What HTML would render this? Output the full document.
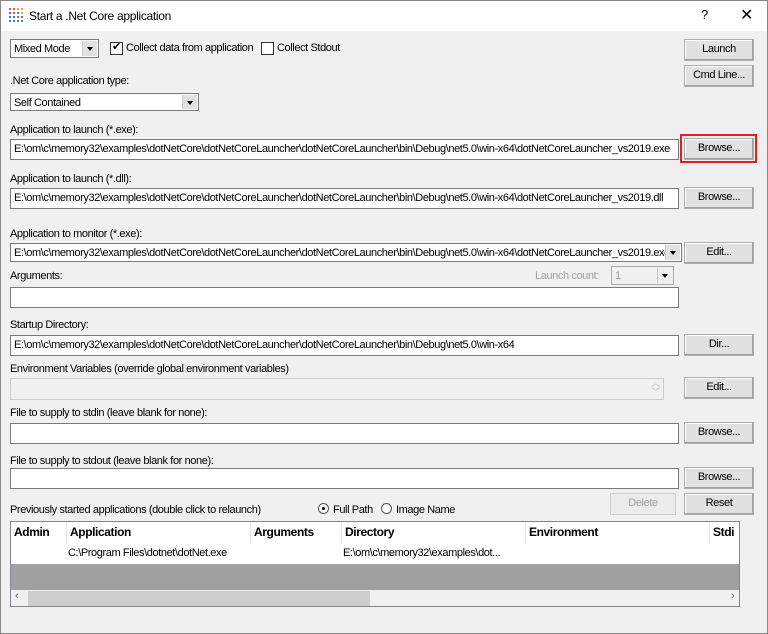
<!DOCTYPE html>
<html><head><style>
*{box-sizing:border-box;margin:0;padding:0}
body{width:768px;height:634px;background:#f0f0f0;font-family:"Liberation Sans",sans-serif;font-size:11px;letter-spacing:-0.4px;color:#000;position:relative;overflow:hidden;border:1px solid #888}
.a{position:absolute;white-space:nowrap}
.title{left:0;top:0;width:766px;height:30px;background:#fff;letter-spacing:0}
.in{position:absolute;background:#fff;border:1px solid #7a7a7a;padding:2px 3px;line-height:15px;white-space:nowrap;overflow:hidden}
.btn{position:absolute;background:#e1e1e1;border:1px solid #adadad;text-align:center;line-height:19px;box-shadow:inset -1px -1px 0 #a0a0a0,inset 1px 1px 0 #fff}
.dd{position:absolute;right:1px;top:1px;bottom:1px;width:15px;background:#e1e1e1;border-left:1px solid #ccc}
.dd:after{content:"";position:absolute;left:4px;top:6px;border:3.5px solid transparent;border-top:4px solid #000}
.cb{position:absolute;width:13px;height:13px;border:1px solid #333;background:#fff}
.th{position:absolute;top:0;height:21px;line-height:21px;font-weight:bold;font-size:12px;padding-left:3px;border-right:1px solid #e5e5e5}
</style></head><body>
<div class="a title"></div>
<svg class="a" style="left:8px;top:7px" width="15" height="15"><g fill="#e0602a"><rect x="0" y="0" width="2" height="2"/><rect x="4" y="0" width="2" height="2"/><rect x="8" y="0" width="2" height="2" fill="#e8a030"/><rect x="12" y="0" width="2" height="2" fill="#e8a030"/></g><g fill="#3a7ad0"><rect x="0" y="4" width="2" height="2"/><rect x="4" y="4" width="2" height="2" fill="#e0602a"/><rect x="8" y="4" width="2" height="2"/><rect x="12" y="4" width="2" height="2" fill="#e8a030"/><rect x="0" y="8" width="2" height="2"/><rect x="4" y="8" width="2" height="2"/><rect x="8" y="8" width="2" height="2" fill="#e0602a"/><rect x="12" y="8" width="2" height="2"/><rect x="0" y="12" width="2" height="2"/><rect x="4" y="12" width="2" height="2"/><rect x="8" y="12" width="2" height="2"/><rect x="12" y="12" width="2" height="2"/></g></svg>
<div class="a" style="left:28px;top:8px;font-size:12px;letter-spacing:-0.3px">Start a .Net Core application</div>
<div class="a" style="left:700px;top:6px;font-size:13px">?</div>
<div class="a" style="left:739px;top:4px;font-size:16px">✕</div>

<div class="in" style="left:9px;top:38px;width:89px;height:19px">Mixed Mode<div class="dd"></div></div>
<div class="cb" style="left:109px;top:41px"><span style="position:absolute;left:1px;top:-3px;font-size:11px">✔</span></div>
<div class="a" style="left:125px;top:41px">Collect data from application</div>
<div class="cb" style="left:260px;top:41px"></div>
<div class="a" style="left:276px;top:41px">Collect Stdout</div>
<div class="btn" style="left:683px;top:38px;width:70px;height:22px">Launch</div>
<div class="btn" style="left:683px;top:64px;width:70px;height:22px">Cmd Line...</div>

<div class="a" style="left:9px;top:74px">.Net Core application type:</div>
<div class="in" style="left:9px;top:92px;width:189px;height:18px">Self Contained<div class="dd"></div></div>

<div class="a" style="left:9px;top:123px">Application to launch (*.exe):</div>
<div class="in" style="left:9px;top:138px;width:669px;height:21px">E:\om\c\memory32\examples\dotNetCore\dotNetCoreLauncher\dotNetCoreLauncher\bin\Debug\net5.0\win-x64\dotNetCoreLauncher_vs2019.exe</div>
<div class="a" style="left:679px;top:133px;width:77px;height:29px;border:2px solid #e02020"></div>
<div class="btn" style="left:683px;top:137px;width:70px;height:22px">Browse...</div>

<div class="a" style="left:9px;top:172px">Application to launch (*.dll):</div>
<div class="in" style="left:9px;top:187px;width:669px;height:21px">E:\om\c\memory32\examples\dotNetCore\dotNetCoreLauncher\dotNetCoreLauncher\bin\Debug\net5.0\win-x64\dotNetCoreLauncher_vs2019.dll</div>
<div class="btn" style="left:683px;top:186px;width:70px;height:22px">Browse...</div>

<div class="a" style="left:9px;top:227px">Application to monitor (*.exe):</div>
<div class="in" style="left:9px;top:242px;width:672px;height:19px;padding-right:18px">E:\om\c\memory32\examples\dotNetCore\dotNetCoreLauncher\dotNetCoreLauncher\bin\Debug\net5.0\win-x64\dotNetCoreLauncher_vs2019.exe<div class="dd"></div></div>
<div class="btn" style="left:683px;top:241px;width:70px;height:22px">Edit...</div>

<div class="a" style="left:9px;top:269px">Arguments:</div>
<div class="a" style="left:534px;top:269px;color:#a0a0a0">Launch count:</div>
<div class="in" style="left:610px;top:265px;width:63px;height:19px;background:#f0f0f0;border-color:#aaa;color:#999">1<div class="dd" style="background:#f0f0f0"></div></div>
<div class="in" style="left:9px;top:286px;width:669px;height:21px"></div>

<div class="a" style="left:9px;top:318px">Startup Directory:</div>
<div class="in" style="left:9px;top:334px;width:669px;height:21px">E:\om\c\memory32\examples\dotNetCore\dotNetCoreLauncher\dotNetCoreLauncher\bin\Debug\net5.0\win-x64</div>
<div class="btn" style="left:683px;top:333px;width:70px;height:22px">Dir...</div>

<div class="a" style="left:9px;top:362px">Environment Variables (override global environment variables)</div>
<div class="in" style="left:9px;top:377px;width:654px;height:22px;background:#f0f0f0;border-color:#ccc"><span style="position:absolute;right:3px;top:0;color:#bbb;font-size:9px;line-height:9px">︿<br>﹀</span></div>
<div class="btn" style="left:683px;top:376px;width:70px;height:22px">Edit...</div>

<div class="a" style="left:9px;top:406px">File to supply to stdin (leave blank for none):</div>
<div class="in" style="left:9px;top:422px;width:669px;height:21px"></div>
<div class="btn" style="left:683px;top:421px;width:70px;height:22px">Browse...</div>

<div class="a" style="left:9px;top:454px">File to supply to stdout (leave blank for none):</div>
<div class="in" style="left:9px;top:467px;width:669px;height:21px"></div>
<div class="btn" style="left:683px;top:466px;width:70px;height:22px">Browse...</div>

<div class="a" style="left:9px;top:503px">Previously started applications (double click to relaunch)</div>
<div class="a" style="left:317px;top:502px;width:11px;height:11px;border-radius:50%;border:1px solid #555;background:#fff"><div style="position:absolute;left:3px;top:3px;width:3px;height:3px;border-radius:50%;background:#000"></div></div>
<div class="a" style="left:332px;top:503px">Full Path</div>
<div class="a" style="left:380px;top:502px;width:11px;height:11px;border-radius:50%;border:1px solid #555;background:#fff"></div>
<div class="a" style="left:395px;top:503px">Image Name</div>
<div class="btn" style="left:609px;top:492px;width:66px;height:22px;color:#a0a0a0;box-shadow:none;border-color:#ccc;background:#ececec">Delete</div>
<div class="btn" style="left:683px;top:492px;width:70px;height:22px">Reset</div>

<div class="a" style="left:9px;top:520px;width:730px;height:86px;border:1px solid #828790;background:#fff;overflow:hidden">
 <div class="th" style="left:0;width:56px">Admin</div>
 <div class="th" style="left:56px;width:184px">Application</div>
 <div class="th" style="left:240px;width:91px">Arguments</div>
 <div class="th" style="left:331px;width:184px">Directory</div>
 <div class="th" style="left:515px;width:184px">Environment</div>
 <div class="th" style="left:699px;width:40px">Stdi</div>
 <div class="a" style="left:57px;top:25px">C:\Program Files\dotnet\dotNet.exe</div>
 <div class="a" style="left:332px;top:25px">E:\om\c\memory32\examples\dot...</div>
 <div class="a" style="left:0;top:42px;width:730px;height:26px;background:#a0a0a0"></div>
 <div class="a" style="left:0;top:68px;width:730px;height:17px;background:#f0f0f0"></div>
 <div class="a" style="left:17px;top:69px;width:342px;height:15px;background:#cdcdcd"></div>
 <div class="a" style="left:4px;top:68px;color:#666">‹</div>
 <div class="a" style="left:720px;top:68px;color:#666">›</div>
</div>
</body></html>
